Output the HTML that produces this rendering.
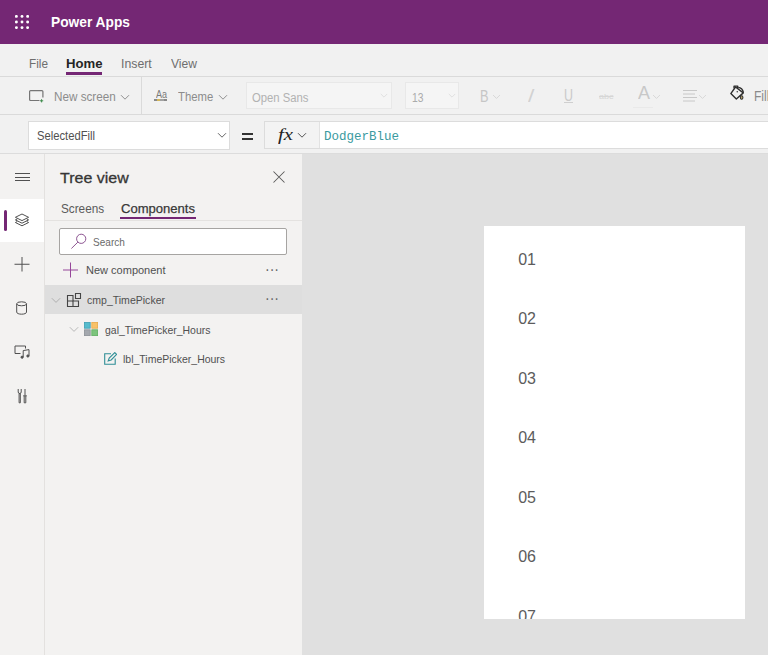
<!DOCTYPE html>
<html>
<head>
<meta charset="utf-8">
<title>Power Apps</title>
<style>
html,body{margin:0;padding:0;}
body{width:768px;height:655px;overflow:hidden;position:relative;background:#f3f2f1;font-family:"Liberation Sans",sans-serif;color:#444;}
.abs{position:absolute;}
.t{position:absolute;white-space:nowrap;line-height:normal;}
#hdr{left:0;top:0;width:768px;height:44px;background:#742774;}
#menu{left:0;top:44px;width:768px;height:32px;background:#f1f1f1;}
#tb{left:0;top:76px;width:768px;height:38px;background:#f1f1f1;border-top:1px solid #dadada;box-sizing:border-box;}
#fb{left:0;top:114px;width:768px;height:40px;background:#f1f1f1;border-top:1px solid #dadada;box-sizing:border-box;}
#rail{left:0;top:154px;width:45px;height:501px;background:#f3f2f1;border-right:1px solid #e3e1df;box-sizing:border-box;}
#tree{left:45px;top:154px;width:257px;height:501px;background:#f3f2f1;}
#canvas{left:302px;top:154px;width:466px;height:501px;background:#e0e0e0;}
#app{left:484px;top:226px;width:261px;height:393px;background:#fff;overflow:hidden;}
.chev{fill:none;stroke:#909090;stroke-width:1;}
.box{box-sizing:border-box;border:1px solid #e8e8e8;background:#f5f5f5;}
</style>
</head>
<body>
<!-- ===== header ===== -->
<div id="hdr" class="abs">
  <svg class="abs" style="left:14.5px;top:14.5px" width="14" height="14" viewBox="0 0 14 14" fill="#fff">
    <circle cx="1.4" cy="1.4" r="1.45"/><circle cx="7" cy="1.4" r="1.45"/><circle cx="12.6" cy="1.4" r="1.45"/>
    <circle cx="1.4" cy="7" r="1.45"/><circle cx="7" cy="7" r="1.45"/><circle cx="12.6" cy="7" r="1.45"/>
    <circle cx="1.4" cy="12.6" r="1.45"/><circle cx="7" cy="12.6" r="1.45"/><circle cx="12.6" cy="12.6" r="1.45"/>
  </svg>
</div>
<div class="t" style="left:51px;top:13.40px;font:bold 15.5px 'Liberation Sans',sans-serif;color:#fff;transform:scaleX(0.8876);transform-origin:0 0;">Power Apps</div>

<!-- ===== menu ===== -->
<div id="menu" class="abs"></div>
<div class="t" style="left:28.5px;top:56.20px;font:normal 13px 'Liberation Sans',sans-serif;color:#6e6e6e;transform:scaleX(0.9068);transform-origin:0 0;">File</div>
<div class="t" style="left:65.8px;top:56.20px;font:bold 13px 'Liberation Sans',sans-serif;color:#252525;transform:scaleX(1.0104);transform-origin:0 0;">Home</div>
<div class="abs" style="left:66px;top:72px;width:36px;height:3px;background:#742774"></div>
<div class="t" style="left:121px;top:56.20px;font:normal 13px 'Liberation Sans',sans-serif;color:#6e6e6e;transform:scaleX(0.9457);transform-origin:0 0;">Insert</div>
<div class="t" style="left:170.5px;top:56.20px;font:normal 13px 'Liberation Sans',sans-serif;color:#6e6e6e;transform:scaleX(0.9301);transform-origin:0 0;">View</div>

<!-- ===== toolbar ===== -->
<div id="tb" class="abs"></div>
<svg class="abs" style="left:28px;top:89px" width="17" height="14" viewBox="0 0 17 14" fill="none" stroke="#757575" stroke-width="1.2">
  <path d="M11.5 11.5H2.6a1 1 0 0 1-1-1V2.6a1 1 0 0 1 1-1h11.3a1 1 0 0 1 1 1v6"/>
  <path d="M13.6 10.2v3.2M12 11.8h3.2" stroke="#3c8a4a" stroke-width="1"/>
</svg>
<div class="t" style="left:53.7px;top:88.80px;font:normal 13.5px 'Liberation Sans',sans-serif;color:#8c8c8c;transform:scaleX(0.8670);transform-origin:0 0;">New screen</div>
<svg class="abs" style="left:120px;top:94px" width="10" height="7" viewBox="0 0 10 7"><path class="chev" d="M1 1.2l4 4 4-4"/></svg>
<div class="abs" style="left:141px;top:77px;width:1px;height:37px;background:#dadada"></div>
<div class="t" style="left:155.5px;top:88.80px;font:normal 10px 'Liberation Sans',sans-serif;color:#7a7a7a;transform:scaleX(0.8991);transform-origin:0 0;">Aa</div>
<div class="abs" style="left:153.5px;top:99px;width:13px;height:2px;opacity:.75;background:linear-gradient(90deg,#666 0 25%,#c9a227 25% 50%,#888 50% 75%,#666 75%)"></div>
<div class="t" style="left:177.6px;top:88.80px;font:normal 13.5px 'Liberation Sans',sans-serif;color:#8c8c8c;transform:scaleX(0.8375);transform-origin:0 0;">Theme</div>
<svg class="abs" style="left:218px;top:94px" width="10" height="7" viewBox="0 0 10 7"><path class="chev" d="M1 1.2l4 4 4-4"/></svg>
<div class="abs box" style="left:246px;top:82px;width:145.5px;height:27.4px"></div>
<div class="t" style="left:251.5px;top:90.60px;font:normal 12.3px 'Liberation Sans',sans-serif;color:#b2b2b2;transform:scaleX(0.9182);transform-origin:0 0;">Open Sans</div>
<svg class="abs" style="left:379.5px;top:93px" width="8" height="5.6" viewBox="0 0 10 7"><path class="chev" style="stroke:#dadada" d="M1 1.2l4 4 4-4"/></svg>
<div class="abs box" style="left:405px;top:82px;width:53.6px;height:27.4px"></div>
<div class="t" style="left:411.5px;top:90.60px;font:normal 12.3px 'Liberation Sans',sans-serif;color:#ababab;transform:scaleX(0.8402);transform-origin:0 0;">13</div>
<svg class="abs" style="left:447.5px;top:93px" width="8" height="5.6" viewBox="0 0 10 7"><path class="chev" style="stroke:#dadada" d="M1 1.2l4 4 4-4"/></svg>
<div class="t" style="left:480px;top:86.60px;font:normal 17px 'Liberation Sans',sans-serif;color:#c6c6c6;transform:scaleX(0.7493);transform-origin:0 0;">B</div>
<svg class="abs" style="left:492px;top:94px" width="9" height="6" viewBox="0 0 10 7"><path class="chev" style="stroke:#d4d4d4" d="M1 1.2l4 4 4-4"/></svg>
<div class="t" style="left:528px;top:84.60px;font:normal 19px 'Liberation Sans',sans-serif;color:#d2d2d2;transform:scaleX(1.2118);transform-origin:0 0;">/</div>
<div class="t" style="left:563.6px;top:85.60px;font:normal 16.5px 'Liberation Sans',sans-serif;color:#cacaca;transform:scaleX(0.7549);transform-origin:0 0;">U</div>
<div class="abs" style="left:563.6px;top:102px;width:9.4px;height:1px;background:#cfcfcf"></div>
<div class="t" style="left:599px;top:92.40px;font:normal 8px 'Liberation Sans',sans-serif;color:#d6d6d6;transform:scaleX(1.1235);transform-origin:0 0;text-decoration:line-through;">abc</div>
<div class="t" style="left:637.5px;top:81.80px;font:normal 19px 'Liberation Sans',sans-serif;color:#c8c8c8;transform:scaleX(0.9458);transform-origin:0 0;">A</div>
<div class="abs" style="left:633px;top:107.4px;width:20px;height:1px;background:#e9e9e9"></div>
<svg class="abs" style="left:652px;top:94px" width="9" height="6" viewBox="0 0 10 7"><path class="chev" style="stroke:#d4d4d4" d="M1 1.2l4 4 4-4"/></svg>
<svg class="abs" style="left:683px;top:89px" width="15" height="14" viewBox="0 0 15 14" stroke="#c8c8c8" stroke-width="1"><path d="M0 1.5h14M0 5h12M0 8.5h14M0 12h12"/></svg>
<svg class="abs" style="left:698px;top:94px" width="9" height="6" viewBox="0 0 10 7"><path class="chev" style="stroke:#d4d4d4" d="M1 1.2l4 4 4-4"/></svg>
<svg class="abs" style="left:729.6px;top:84.6px" width="15.6" height="15.6" viewBox="0 0 17 17" fill="none" stroke="#2e2e2e" stroke-width="1.5" stroke-linejoin="round">
  <path d="M0.9 9.3L6 2.2l8.5 6.4-7.6 6.6z"/>
  <path d="M4.4 3.6V1.2h4v2.6"/>
  <path d="M9 2.6c2.8.2 4.9 2.4 5.6 5.6" stroke-width="1.5"/>
  <circle cx="7.9" cy="7.4" r="0.8" fill="#333" stroke="none"/>
  <ellipse cx="12.7" cy="13.6" rx="1.4" ry="1.9" fill="#b9a56a" stroke-width="1.1"/>
</svg>
<div class="t" style="left:754.2px;top:87.50px;font:normal 14px 'Liberation Sans',sans-serif;color:#8a8a8a;transform:scaleX(0.8600);transform-origin:0 0;">Fill</div>

<!-- ===== formula bar ===== -->
<div id="fb" class="abs"></div>
<div class="abs" style="left:28px;top:121px;width:202px;height:29px;background:#fff;border:1px solid #dcdcdc;box-sizing:border-box"></div>
<div class="t" style="left:36.7px;top:128.60px;font:normal 12px 'Liberation Sans',sans-serif;color:#505050;transform:scaleX(0.9350);transform-origin:0 0;">SelectedFill</div>
<svg class="abs" style="left:217px;top:132px" width="10" height="7" viewBox="0 0 10 7"><path class="chev" style="stroke:#666" d="M1 1.2l4 4 4-4"/></svg>
<div class="abs" style="left:241.5px;top:133.4px;width:11.4px;height:2px;background:#333"></div>
<div class="abs" style="left:241.5px;top:137.6px;width:11.4px;height:2px;background:#333"></div>
<div class="abs" style="left:264px;top:121px;width:504px;height:28px;background:#fff;border:1px solid #dcdcdc;border-right:none;box-sizing:border-box"></div>
<div class="abs" style="left:265px;top:122px;width:54.5px;height:26px;background:#f3f3f3;border-right:1px solid #e2e2e2;box-sizing:border-box"></div>
<div class="t" style="left:278px;top:125.00px;font:italic normal 17px 'Liberation Serif',serif;color:#222;transform:scaleX(1.2214);transform-origin:0 0;">fx</div>
<svg class="abs" style="left:297px;top:132px" width="10" height="7" viewBox="0 0 10 7"><path class="chev" style="stroke:#555" d="M1 1.2l4 4 4-4"/></svg>
<div class="t" style="left:324px;top:129.50px;font:normal 12.5px 'Liberation Mono',monospace;color:#3a9aa0;transform:scaleX(0.9998);transform-origin:0 0;">DodgerBlue</div>

<div class="abs" style="left:0;top:153px;width:768px;height:1px;background:#dcdcdc"></div>
<!-- ===== left rail ===== -->
<div id="rail" class="abs"></div>
<div class="abs" style="left:14.5px;top:173px;width:15px;height:1px;background:#505050"></div>
<div class="abs" style="left:14.5px;top:176.7px;width:15px;height:1px;background:#505050"></div>
<div class="abs" style="left:14.5px;top:180.4px;width:15px;height:1px;background:#505050"></div>
<div class="abs" style="left:0;top:199px;width:44px;height:43px;background:#fff"></div>
<div class="abs" style="left:3.7px;top:209.6px;width:3.4px;height:21.4px;border-radius:1.7px;background:#742774"></div>
<svg class="abs" style="left:15px;top:213.2px" width="14" height="14" viewBox="0 0 14 14" fill="none" stroke="#505050" stroke-width="1" stroke-linejoin="round">
  <path d="M7 1l6.6 3.3L7 7.6 0.4 4.3z"/><path d="M2.3 5.9L0.4 6.9 7 10.2l6.6-3.3-1.9-1"/><path d="M2.3 8.5L0.4 9.5 7 12.8l6.6-3.3-1.9-1"/>
</svg>
<svg class="abs" style="left:14px;top:257px" width="16" height="15" viewBox="0 0 16 15" stroke="#505050" stroke-width="1"><path d="M8 0v14.5M0.5 7.25h15"/></svg>
<svg class="abs" style="left:16px;top:301.4px" width="12" height="14" viewBox="0 0 12 14" fill="none" stroke="#505050" stroke-width="1">
  <ellipse cx="5.6" cy="2.8" rx="4.9" ry="2"/><path d="M0.7 2.8v8.4c0 1.1 2.2 2 4.9 2s4.9-.9 4.9-2V2.8"/>
</svg>
<svg class="abs" style="left:14px;top:345px" width="17" height="15" viewBox="0 0 17 15" fill="none" stroke="#505050" stroke-width="1">
  <path d="M6.5 8.5H1V1h10.5v2.5"/><path d="M9.2 12V5.6l5.8-1v6.2"/><circle cx="8.1" cy="12.2" r="1.1" fill="#505050"/><circle cx="13.9" cy="11" r="1.1" fill="#505050"/>
</svg>
<svg class="abs" style="left:17px;top:388px" width="11" height="16" viewBox="0 0 11 16" fill="none" stroke="#505050" stroke-width="1">
  <path d="M1.2 1v3a1.5 1.5 0 0 0 3 0V1"/><path d="M2.1 5.6h1.2v9.2H2.1z"/><path d="M8 1v6.5"/><path d="M6.2 7.8h3.6"/><path d="M7.2 8v6.8h1.6V8"/>
</svg>

<!-- ===== tree panel ===== -->
<div id="tree" class="abs"></div>
<div class="t" style="left:60.25px;top:168.90px;font:normal 15.2px 'Liberation Sans',sans-serif;color:#333;transform:scaleX(1.0531);transform-origin:0 0;-webkit-text-stroke:0.3px #3a3a3a;">Tree view</div>
<svg class="abs" style="left:272.5px;top:170.6px" width="12" height="12" viewBox="0 0 12 12" stroke="#5a5a5a" stroke-width="1.05"><path d="M0.5 0.5l11 11M11.5 0.5l-11 11"/></svg>
<div class="t" style="left:60.7px;top:200.70px;font:normal 13px 'Liberation Sans',sans-serif;color:#5a5a5a;transform:scaleX(0.9035);transform-origin:0 0;">Screens</div>
<div class="t" style="left:121px;top:200.70px;font:normal 13px 'Liberation Sans',sans-serif;color:#333;transform:scaleX(1.0038);transform-origin:0 0;-webkit-text-stroke:0.25px #444;">Components</div>
<div class="abs" style="left:120px;top:216.6px;width:76px;height:2.6px;background:#742774"></div>
<div class="abs" style="left:45px;top:219.6px;width:257px;height:1px;background:#e4e2e0"></div>
<div class="abs" style="left:59px;top:228px;width:228px;height:27px;background:#fff;border:1px solid #a6a4a2;border-radius:2px;box-sizing:border-box"></div>
<svg class="abs" style="left:71px;top:233px" width="16" height="17" viewBox="0 0 16 17" fill="none" stroke="#8d5592" stroke-width="1"><circle cx="10.2" cy="5.8" r="4.6"/><path d="M6.9 9.1L0.4 15.5"/></svg>
<div class="t" style="left:93.4px;top:235.50px;font:normal 11.2px 'Liberation Sans',sans-serif;color:#6a6a6a;transform:scaleX(0.8984);transform-origin:0 0;">Search</div>
<svg class="abs" style="left:63px;top:262px" width="15" height="16" viewBox="0 0 15 16" stroke="#96479a" stroke-width="1"><path d="M7.5 0.5v15M0 8h15"/></svg>
<div class="t" style="left:85.7px;top:264.00px;font:normal 11.2px 'Liberation Sans',sans-serif;color:#505050;transform:scaleX(0.9840);transform-origin:0 0;">New component</div>
<div class="t" style="left:265px;top:260.50px;font:normal 16px 'Liberation Sans',sans-serif;color:#666;transform:scaleX(0.8759);transform-origin:0 0;">···</div>
<div class="abs" style="left:45px;top:285px;width:257px;height:29px;background:#dedede"></div>
<svg class="abs" style="left:51px;top:297px" width="10" height="7" viewBox="0 0 10 7"><path class="chev" style="stroke:#b0b0b0" d="M0.8 1.2l4.2 4.2 4.2-4.2"/></svg>
<svg class="abs" style="left:66px;top:292px" width="16" height="16" viewBox="0 0 16 16" fill="none" stroke="#444" stroke-width="1.1">
  <path d="M1.5 3.5H7V9h5.5v5.5h-11z"/><path d="M1.5 9H7v5.5"/><path d="M9.5 1.5h5v5h-5z"/>
</svg>
<div class="t" style="left:87px;top:294.40px;font:normal 11.5px 'Liberation Sans',sans-serif;color:#505050;transform:scaleX(0.9155);transform-origin:0 0;">cmp_TimePicker</div>
<div class="t" style="left:265px;top:290.00px;font:normal 16px 'Liberation Sans',sans-serif;color:#666;transform:scaleX(0.8759);transform-origin:0 0;">···</div>
<svg class="abs" style="left:69px;top:326px" width="10" height="7" viewBox="0 0 10 7"><path class="chev" style="stroke:#b8b8b8" d="M0.8 1.2l4.2 4.2 4.2-4.2"/></svg>
<svg class="abs" style="left:84px;top:322px" width="14" height="14" viewBox="0 0 14 14" stroke-width="0.8">
  <rect x="0.4" y="0.4" width="5.8" height="5.8" fill="#56bccd" stroke="#3f9fb3"/><rect x="7.8" y="0.4" width="5.8" height="5.8" fill="#f8c268" stroke="#e8a94a"/>
  <rect x="0.4" y="7.8" width="5.8" height="5.8" fill="#a4a8ae" stroke="#8d9198"/><rect x="7.8" y="7.8" width="5.8" height="5.8" fill="#7cc47c" stroke="#5fae62"/>
</svg>
<div class="t" style="left:105.2px;top:323.60px;font:normal 11.5px 'Liberation Sans',sans-serif;color:#505050;transform:scaleX(0.9102);transform-origin:0 0;">gal_TimePicker_Hours</div>
<svg class="abs" style="left:104px;top:352px" width="13" height="13" viewBox="0 0 13 13" fill="none" stroke="#2f8f96" stroke-width="1.1">
  <path d="M7 1.8H0.7v10.5h10.5V6.5"/><path d="M4.2 9l1-3L10.8 0.6l1.8 1.8L7.2 8z"/>
</svg>
<div class="t" style="left:123.4px;top:352.80px;font:normal 11.5px 'Liberation Sans',sans-serif;color:#505050;transform:scaleX(0.9111);transform-origin:0 0;">lbl_TimePicker_Hours</div>

<!-- ===== canvas ===== -->
<div id="canvas" class="abs"></div>
<div id="app" class="abs"></div>
<div class="t" style="left:518.2px;top:251.00px;font:normal 16px 'Liberation Sans',sans-serif;color:#5c5c5c;">01</div>
<div class="t" style="left:518.2px;top:310.00px;font:normal 16px 'Liberation Sans',sans-serif;color:#5c5c5c;">02</div>
<div class="t" style="left:518.2px;top:370.00px;font:normal 16px 'Liberation Sans',sans-serif;color:#5c5c5c;">03</div>
<div class="t" style="left:518.2px;top:429.00px;font:normal 16px 'Liberation Sans',sans-serif;color:#5c5c5c;">04</div>
<div class="t" style="left:518.2px;top:489.00px;font:normal 16px 'Liberation Sans',sans-serif;color:#5c5c5c;">05</div>
<div class="t" style="left:518.2px;top:548.00px;font:normal 16px 'Liberation Sans',sans-serif;color:#5c5c5c;">06</div>
<div class="abs" style="left:484px;top:600px;width:261px;height:19px;overflow:hidden"><div class="t" style="left:34.2px;top:8.00px;font:normal 16px 'Liberation Sans',sans-serif;color:#5c5c5c;">07</div></div>
</body>
</html>
